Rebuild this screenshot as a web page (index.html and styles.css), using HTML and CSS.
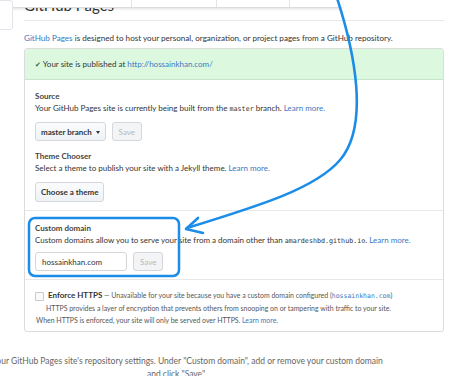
FILE: index.html
```html
<!DOCTYPE html>
<html lang="en">
  <head>
    <meta charset="UTF-8" />
    <title>GitHub Pages</title>
    <link rel="stylesheet" href="styles.css">
  </head>
  <body>
    <div class="top-menu">
      <span class="menu-cell w1"></span>
      <span class="menu-cell w2"></span>
      <span class="menu-cell w3"></span>
      <span class="menu-cell w4"></span>
    </div>
    <div class="side-tab"></div>

    <div class="settings">
      <h2 class="pages-title">GitHub Pages</h2>
      <p class="intro">
        <a href="#">GitHub Pages</a> is designed to host your personal, organization, or project pages from a GitHub repository.
      </p>

      <div class="pages-box">
        <div class="flash-ok">
          <span class="check">&#10004;</span> Your site is published at <a href="#">http://hossainkhan.com/</a>
        </div>

        <div class="section">
          <div class="section-title">Source</div>
          <div class="section-text">
            Your GitHub Pages site is currently being built from the <code>master</code> branch. <a href="#">Learn more.</a>
          </div>
          <div class="form-row">
            <button class="btn">master branch <span class="caret"></span></button>
            <button class="btn btn-disabled">Save</button>
          </div>

          <div class="section-title theme-title">Theme Chooser</div>
          <div class="section-text">
            Select a theme to publish your site with a Jekyll theme. <a href="#">Learn more.</a>
          </div>
          <div class="form-row theme-row">
            <button class="btn btn-tall">Choose a theme</button>
          </div>
        </div>

        <div class="section section-domain">
          <div class="section-title">Custom domain</div>
          <div class="section-text">
            Custom domains allow you to serve your site from a domain other than <code>amardeshbd.github.io</code>. <a href="#">Learn more.</a>
          </div>
          <div class="form-row domain-row">
            <input class="domain-input" type="text" value="hossainkhan.com" />
            <button class="btn btn-disabled">Save</button>
          </div>
        </div>

        <div class="section section-https">
          <label class="https-row">
            <span class="checkbox"></span>
            <span class="https-text">
              <b class="https-title">Enforce HTTPS</b> &mdash; Unavailable for your site because you have a custom domain configured (<a href="#"><code>hossainkhan.com</code></a>)
            </span>
          </label>
          <p class="https-note">HTTPS provides a layer of encryption that prevents others from snooping on or tampering with traffic to your site.</p>
          <p class="https-note https-last">When HTTPS is enforced, your site will only be served over HTTPS. <a href="#">Learn more.</a></p>
        </div>
      </div>
    </div>

    <div class="caption">
      Go to your GitHub Pages site's repository settings. Under "Custom domain", add or remove your custom domain<br />
      and click "Save"
    </div>

    <svg class="annotation" width="474" height="376" viewBox="0 0 474 376">
      <rect x="29" y="218" width="150" height="58" rx="6" ry="6" fill="none" stroke="#1b8de8" stroke-width="2.5" />
      <path d="M337 -2 C354 50, 370 125, 340 160 C316 188, 262 205, 187 228" fill="none" stroke="#1b8de8" stroke-width="2.6" stroke-linecap="round" />
      <path d="M198 218 L186 229 L203 233" fill="none" stroke="#1b8de8" stroke-width="2.6" stroke-linecap="round" stroke-linejoin="round" />
    </svg>
  </body>
</html>
```

FILE: styles.css
```css
html,
body {
  margin: 0;
  padding: 0;
}

body {
  position: relative;
  width: 474px;
  height: 376px;
  overflow: hidden;
  background-color: #fff;
  color: #333;
  font-family: Lato, "Open Sans", sans-serif;
  font-size: 8px;
}

a {
  color: #4078c0;
  text-decoration: none;
}

code {
  font-family: "DejaVu Sans Mono", "Liberation Mono", monospace;
  font-size: 6.7px;
}

/* overlays cut by the screenshot edge */
.top-menu {
  position: absolute;
  top: 0;
  left: 0;
  display: flex;
  height: 7px;
  background-color: #fff;
  border-bottom: 1px solid #dcdcdc;
  box-shadow: 0 1px 3px rgba(0, 0, 0, 0.12);
}

.menu-cell {
  border-right: 1px solid #e4e4e4;
}

.menu-cell.w1 { width: 131px; }
.menu-cell.w2 { width: 84px; }
.menu-cell.w3 { width: 72px; }
.menu-cell.w4 { width: 52px; border-right: none; }

.side-tab {
  position: absolute;
  top: 0;
  left: -4px;
  width: 15px;
  height: 28px;
  border: 1px solid #e1e4e8;
  border-radius: 3px;
  background-color: #fff;
}

.settings {
  width: 420px;
  padding-left: 24px;
}

.pages-title {
  margin: -5px 0 0;
  padding-bottom: 5px;
  height: 20px;
  font-size: 15px;
  line-height: 20px;
  font-weight: normal;
  color: #333;
  border-bottom: 1px solid #e8e8e8;
}

.intro {
  margin: 11px 0 4px;
  line-height: 12px;
  font-size: 8.1px;
}

.pages-box {
  border: 1px solid #dcdcdc;
  border-radius: 3px;
}

.flash-ok {
  height: 30px;
  padding-left: 10px;
  line-height: 31px;
  background-color: #dcf9e0;
  border-bottom: 1px solid #c6e6cb;
  border-radius: 3px 3px 0 0;
}

.check {
  color: #2d6e35;
  font-size: 7px;
}

.section {
  padding: 10px 10px 8px;
}

.section-title {
  font-weight: 700;
  color: #444;
  line-height: 12px;
}

.theme-title {
  margin-top: 9px;
}

.section-text {
  line-height: 12px;
}

.form-row {
  display: flex;
  gap: 6px;
  margin-top: 7px;
}

.theme-row {
  margin-top: 8px;
}

.btn {
  height: 19px;
  padding: 0 5px;
  font-family: inherit;
  font-size: 8px;
  font-weight: 700;
  color: #333;
  background: linear-gradient(#fafbfc, #eff3f6);
  border: 1px solid #d4d7db;
  border-radius: 3px;
}

.btn-tall {
  height: 20px;
}

.btn-disabled {
  padding: 0 6px;
  color: #b5b9bd;
  font-weight: normal;
  background: #f3f4f6;
}

.caret {
  display: inline-block;
  margin-left: 2px;
  vertical-align: middle;
  border-top: 3px solid #333;
  border-left: 2px solid transparent;
  border-right: 2px solid transparent;
}

.section-domain {
  border-top: 1px solid #e8e8e8;
  padding-top: 11px;
  padding-bottom: 8px;
}

.domain-row {
  margin-top: 5px;
}

.domain-input {
  box-sizing: border-box;
  width: 92px;
  height: 19px;
  padding: 0 6px;
  font-family: inherit;
  font-size: 8px;
  line-height: 17px;
  color: #333;
  border: 1px solid #d6d6d6;
  border-radius: 3px;
}

.section-https {
  border-top: 1px solid #e8e8e8;
  padding: 9px 10px 5px 9px;
}

.https-row {
  display: flex;
  gap: 4px;
  align-items: flex-start;
  margin-left: 1px;
}

.checkbox {
  flex: 0 0 auto;
  width: 7px;
  height: 7px;
  margin-top: 3px;
  border: 1px solid #c9c9c9;
  border-radius: 1px;
  background-color: #fafafa;
}

.https-text,
.https-note {
  font-size: 6.95px;
  line-height: 12px;
  color: #555;
}

.https-text code {
  font-size: 6.5px;
}

.https-title {
  font-size: 8px;
  color: #333;
}

.https-note {
  margin: 0 0 0 12px;
}

.https-last {
  margin-left: 2px;
}

.caption {
  width: 520px;
  margin: 23px 0 0 -84px;
  text-align: center;
  font-size: 8.5px;
  line-height: 13px;
  color: #666;
  white-space: nowrap;
}

.annotation {
  position: absolute;
  top: 0;
  left: 0;
  pointer-events: none;
}
```
